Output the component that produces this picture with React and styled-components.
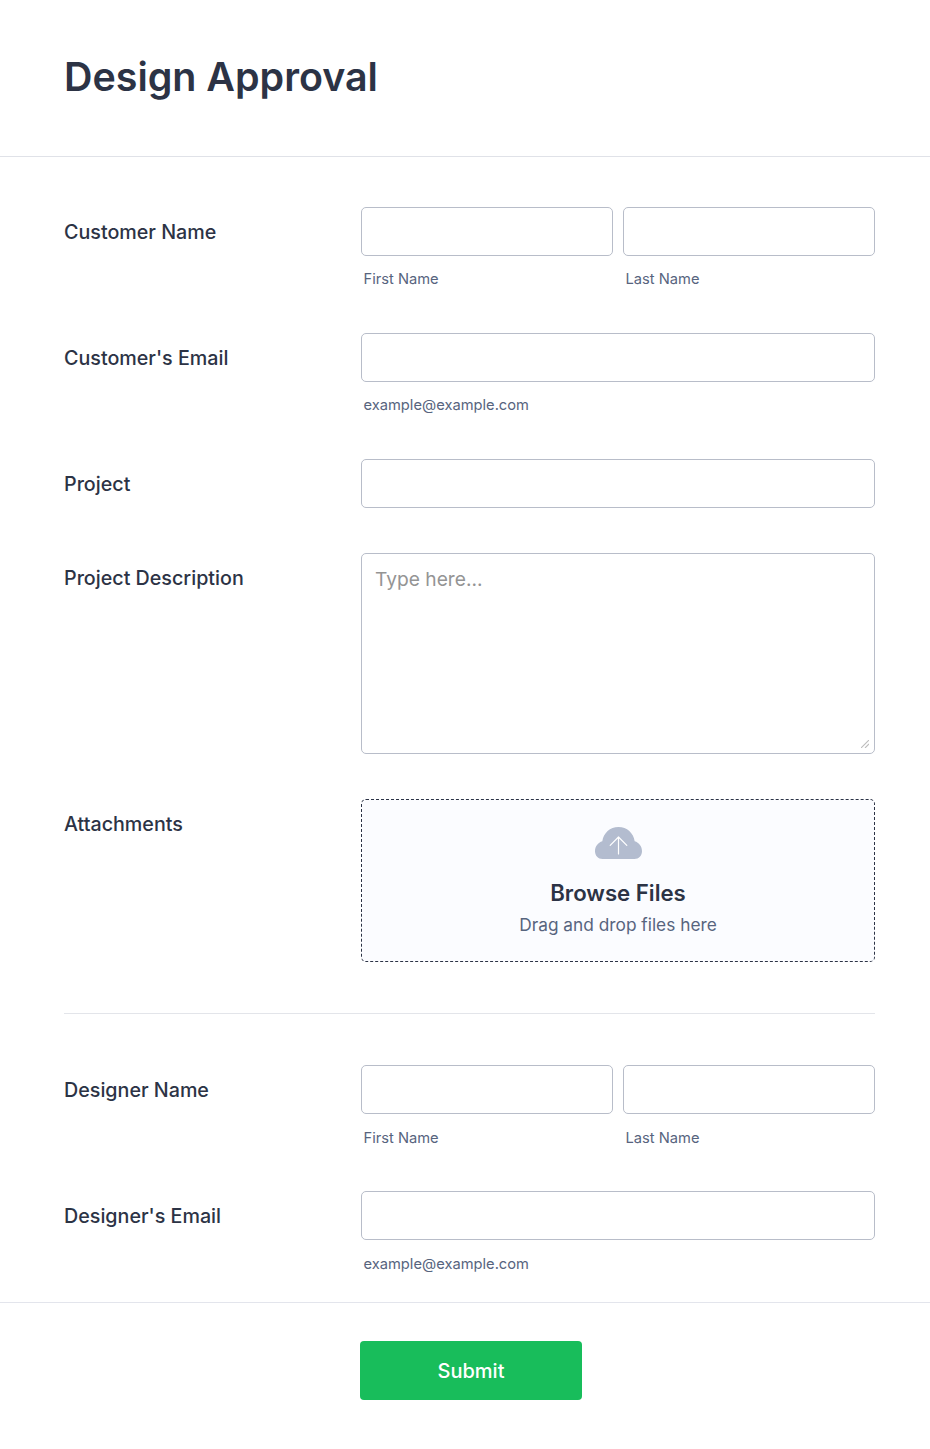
import styled, { createGlobalStyle } from 'styled-components';

const GlobalStyle = createGlobalStyle`
    html, body {
        margin: 0;
        padding: 0;
        background: #fff;
        font-family: Inter, "Liberation Sans", sans-serif;
    }
    * {
        box-sizing: border-box;
    }
`;

const App = () => {
    return (
        <Page>
            <GlobalStyle />
            <Header>
                <Title>Design Approval</Title>
            </Header>

            <Body>
                <Row>
                    <Label>Customer Name</Label>
                    <Field>
                        <NameGrid>
                            <div>
                                <TextInput type="text" />
                                <SubLabel>First Name</SubLabel>
                            </div>
                            <div>
                                <TextInput type="text" />
                                <SubLabel>Last Name</SubLabel>
                            </div>
                        </NameGrid>
                    </Field>
                </Row>

                <Row>
                    <Label>Customer's Email</Label>
                    <Field>
                        <TextInput type="text" />
                        <SubLabel>example@example.com</SubLabel>
                    </Field>
                </Row>

                <Row>
                    <Label>Project</Label>
                    <Field>
                        <TextInput type="text" />
                    </Field>
                </Row>

                <Row>
                    <Label>Project Description</Label>
                    <TextAreaField>
                        <TextArea placeholder="Type here..." />
                        <ResizeGrip viewBox="0 0 8 8" width="8" height="8">
                            <path d="M0 8L8 0M4 8L8 4" fill="none" stroke="#bdbdbd" strokeWidth="1.1" />
                        </ResizeGrip>
                    </TextAreaField>
                </Row>

                <Row>
                    <Label>Attachments</Label>
                    <Field>
                        <DropZone>
                            <CloudIcon />
                            <BrowseTitle>Browse Files</BrowseTitle>
                            <BrowseHint>Drag and drop files here</BrowseHint>
                        </DropZone>
                    </Field>
                </Row>

                <Divider />

                <Row>
                    <Label>Designer Name</Label>
                    <Field>
                        <NameGrid>
                            <div>
                                <TextInput type="text" />
                                <SubLabel $gap={15}>First Name</SubLabel>
                            </div>
                            <div>
                                <TextInput type="text" />
                                <SubLabel $gap={15}>Last Name</SubLabel>
                            </div>
                        </NameGrid>
                    </Field>
                </Row>

                <LastRow>
                    <Label>Designer's Email</Label>
                    <Field>
                        <TextInput type="text" />
                        <SubLabel $gap={15}>example@example.com</SubLabel>
                    </Field>
                </LastRow>
            </Body>

            <Footer>
                <SubmitButton type="button">Submit</SubmitButton>
            </Footer>
        </Page>
    );
};

const CloudIcon = () => (
    <CloudSvg viewBox="0 0 47 32" width="47" height="32">
        <path
            d="M7.5 32C3.2 32 0 28.8 0 24.3C0 19.5 3 15.5 7.3 14.3C8.5 6 15 0 23.5 0C32 0 38.5 6 39.7 14.3C44 15.5 47 19.5 47 24.3C47 28.8 43.8 32 39.5 32Z"
            fill="#b3bccf"
        />
        <path
            d="M23.5 27V10M15.2 18.3L23.5 10L31.8 18.3"
            fill="none"
            stroke="#fff"
            strokeWidth="1.2"
            strokeLinecap="round"
            strokeLinejoin="round"
        />
    </CloudSvg>
);

const Page = styled.div`
    width: 930px;
    height: 1449px;
    background: #fff;
    color: #2c3345;
`;

const Header = styled.header`
    height: 157px;
    padding: 54px 64px 0;
    border-bottom: 1px solid #e0e2e8;
`;

const Title = styled.h1`
    margin: 0;
    font-size: 39.4px;
    line-height: 46px;
    font-weight: 600;
    color: #2c3345;
`;

const Body = styled.main`
    height: 1145px;
    padding: 50px 55px 0 64px;
`;

const Row = styled.section`
    display: flex;
    margin-bottom: 45px;
`;

const LastRow = styled(Row)`
    margin-bottom: 0;
`;

const Label = styled.label`
    width: 297px;
    flex-shrink: 0;
    padding-top: 13px;
    font-size: 19.7px;
    line-height: 25px;
    font-weight: 500;
    color: #2c3345;
`;

const Field = styled.div`
    flex: 1;
    min-width: 0;
`;

const TextAreaField = styled(Field)`
    position: relative;
`;

const NameGrid = styled.div`
    display: grid;
    grid-template-columns: 1fr 1fr;
    column-gap: 10px;
`;

const TextInput = styled.input`
    display: block;
    width: 100%;
    height: 49px;
    padding: 0 14px;
    background: #fff;
    border: 1px solid #b8bdc9;
    border-radius: 5px;
    outline: none;
`;

const SubLabel = styled.div`
    height: 32px;
    padding: ${(p) => p.$gap || 14}px 0 0 2.5px;
    font-size: 14.7px;
    line-height: 18px;
    color: #57647e;
`;

const TextArea = styled.textarea`
    display: block;
    width: 100%;
    height: 201px;
    padding: 12px 13px;
    font-family: Inter, "Liberation Sans", sans-serif;
    font-size: 19.2px;
    line-height: 26px;
    color: #2c3345;
    background: #fff;
    border: 1px solid #b8bdc9;
    border-radius: 5px;
    outline: none;
    resize: none;
    &::placeholder {
        color: #949494;
        opacity: 1;
    }
`;

const ResizeGrip = styled.svg`
    position: absolute;
    right: 6px;
    bottom: 6px;
`;

const DropZone = styled.div`
    height: 163px;
    padding-top: 27px;
    display: flex;
    flex-direction: column;
    align-items: center;
    background: #fbfcff;
    border: 1px dashed #2c3345;
    border-radius: 5px;
`;

const CloudSvg = styled.svg`
    display: block;
    margin-bottom: 20px;
`;

const BrowseTitle = styled.div`
    font-size: 22.2px;
    line-height: 28px;
    font-weight: 600;
    color: #2c3345;
`;

const BrowseHint = styled.div`
    margin-top: 7px;
    font-size: 17.3px;
    line-height: 22px;
    color: #57647e;
`;

const Divider = styled.hr`
    height: 1px;
    margin: 51px 0;
    border: 0;
    background: #e3e5ea;
`;

const Footer = styled.footer`
    padding: 38px 0 0 360px;
    border-top: 1px solid #e3e5ec;
`;

const SubmitButton = styled.button`
    display: block;
    width: 222px;
    height: 59px;
    font-family: Inter, "Liberation Sans", sans-serif;
    font-size: 20px;
    font-weight: 500;
    color: #fff;
    background: #18bd5b;
    border: 0;
    border-radius: 4px;
`;

export default App;
